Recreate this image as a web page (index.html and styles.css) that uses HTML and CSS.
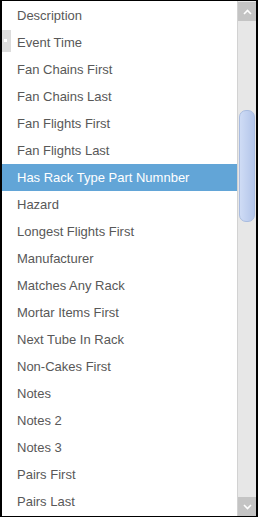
FILE: index.html
```html
<!DOCTYPE html>
<html lang="en">

<head>
     <meta charset="UTF-8">
     <title>Sort Fields</title>
     <link rel="stylesheet" href="styles.css">
</head>

<body>
     <div class="listbox">
          <ul class="options">
               <li>Description</li>
               <li>Event Time</li>
               <li>Fan Chains First</li>
               <li>Fan Chains Last</li>
               <li>Fan Flights First</li>
               <li>Fan Flights Last</li>
               <li class="selected">Has Rack Type Part Numnber</li>
               <li>Hazard</li>
               <li>Longest Flights First</li>
               <li>Manufacturer</li>
               <li>Matches Any Rack</li>
               <li>Mortar Items First</li>
               <li>Next Tube In Rack</li>
               <li>Non-Cakes First</li>
               <li>Notes</li>
               <li>Notes 2</li>
               <li>Notes 3</li>
               <li>Pairs First</li>
               <li>Pairs Last</li>
          </ul>
          <div class="scrollbar">
               <div class="arrow">
                    <svg width="9" height="6" viewBox="0 0 9 6"><path d="M1 5 L4.5 1.5 L8 5" fill="none" stroke="#fff" stroke-width="1.6"/></svg>
               </div>
               <div class="track">
                    <div class="thumb"></div>
               </div>
               <div class="arrow">
                    <svg width="9" height="6" viewBox="0 0 9 6"><path d="M1 1 L4.5 4.5 L8 1" fill="none" stroke="#fff" stroke-width="1.6"/></svg>
               </div>
          </div>
          <!-- tutamaç -->
          <div class="handle"><span></span></div>
     </div>
</body>

</html>
```

FILE: styles.css
```css
body {
     margin: 0;
     background-color: #fff;
     font-family: "Liberation Sans", Arial, sans-serif;
}

.listbox {
     position: relative;
     display: flex;
     width: 254px;
     height: 515px;
     border-top: 1px solid #000;
     border-left: 2px solid #000;
     border-right: 2px solid #000;
     border-bottom: 1px solid #000;
     overflow: hidden;
}

.options {
     flex: 1;
     list-style: none;
     margin: 0;
     padding: 1px 0 0 0;
     overflow: hidden;
}

.options li {
     height: 27px;
     line-height: 27px;
     padding-left: 15px;
     font-size: 13px;
     color: #585858;
     white-space: nowrap;
}

.options li.selected {
     background-color: #62a5d7;
     color: #fff;
}

.scrollbar {
     width: 18px;
     display: flex;
     flex-direction: column;
     background-color: #e7e7e7;
     border-left: 1px solid #d2d2d2;
     padding-top: 1px;
}

.arrow {
     height: 19px;
     background-color: #c4c4c4;
     display: flex;
     align-items: center;
     justify-content: center;
}

.track {
     flex: 1;
     padding-top: 89px;
}

.thumb {
     height: 110px;
     margin: 0 1px 0 1px;
     border: 1px solid #a9bce0;
     border-radius: 7px;
     background: linear-gradient(to right, #cfdcf5, #b3c5ea);
}

.handle {
     position: absolute;
     left: -2px;
     top: 29px;
     width: 11px;
     height: 22px;
     background-color: #dcdcdc;
}

.handle span {
     position: absolute;
     left: 4px;
     top: 9px;
     width: 3px;
     height: 3px;
     background-color: #fff;
}
```
